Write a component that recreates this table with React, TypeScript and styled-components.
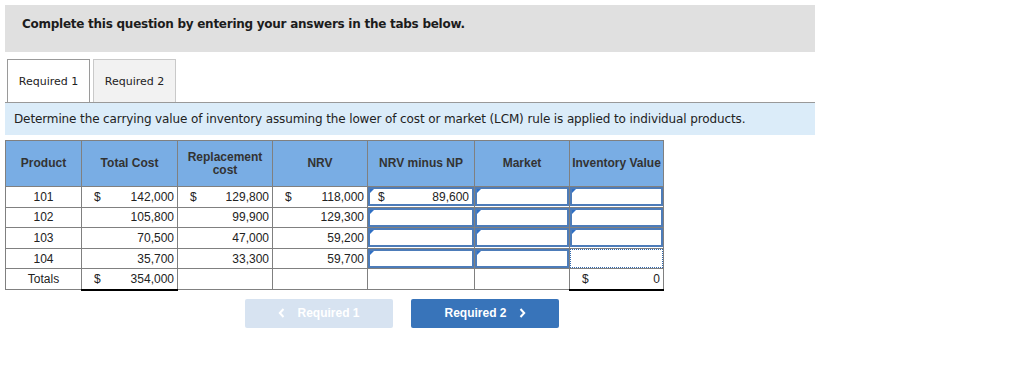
import React from "react";
import styled, { createGlobalStyle, css } from "styled-components";

const GlobalStyle = createGlobalStyle`
  html, body { margin: 0; padding: 0; background: #fff; }
  body { font-family: "DejaVu Sans", Verdana, sans-serif; color: #222; }
`;

const Page = styled.div`
  padding: 5px;
  width: 810px;
`;

const Banner = styled.div`
  height: 47px;
  box-sizing: border-box;
  background: #e0e0e0;
  padding: 12px 0 0 17px;
  line-height: 14px;
  font-size: 12px;
  letter-spacing: -0.26px;
  font-weight: bold;
  color: #1c1c1c;
`;

const TabBar = styled.div`
  margin-top: 7px;
  padding-left: 2px;
  display: flex;
  gap: 3px;
  border-bottom: 1px solid #999;
`;

const Tab = styled.div<{ $active?: boolean }>`
  width: 83px;
  height: 43px;
  box-sizing: border-box;
  display: flex;
  align-items: center;
  justify-content: center;
  font-size: 11px;
  color: #222;
  border: 1px solid ${(p) => (p.$active ? "#9a9a9a" : "#c9c9c9")};
  border-bottom: none;
  background: ${(p) => (p.$active ? "#fff" : "#f2f2f2")};
`;

const Instruction = styled.div`
  height: 32px;
  background: #dbecf9;
  display: flex;
  align-items: center;
  padding-left: 9px;
  font-size: 12px;
  letter-spacing: -0.12px;
  color: #222;
`;

const Grid = styled.table`
  margin-top: 5px;
  width: 658px;
  border-collapse: collapse;
  font-family: "Liberation Sans", Arial, sans-serif;
  font-size: 12px;
  color: #222;
  table-layout: fixed;
`;

const Head = styled.th<{ $w: number }>`
  width: ${(p) => p.$w - 1}px;
  height: 45px;
  background: #79ade4;
  border: 1px solid #808080;
  font-weight: bold;
  color: #333;
  padding: 0;
  line-height: 13px;
  text-align: center;
`;

const Cell = styled.td<{ $thick?: boolean }>`
  height: 19.6px;
  padding: 0;
  border: 1px solid #808080;
  ${(p) =>
    p.$thick &&
    css`
      border-bottom: 2px solid #000;
    `}
`;

const Label = styled.div`
  text-align: center;
`;

const Amount = styled.div`
  display: flex;
  justify-content: space-between;
  padding: 0 3px 0 12px;
`;

const Entry = styled.div<{ $dotted?: boolean }>`
  position: relative;
  box-sizing: border-box;
  height: 19px;
  border: ${(p) => (p.$dotted ? "1px dotted #2f68b0" : "2px solid #4d7cb9")};
  display: flex;
  align-items: center;
  justify-content: space-between;
  padding: 0 3px 0 8px;
  background: #fff;
`;

const Marker = styled.span`
  position: absolute;
  left: 0;
  top: 0;
  width: 0;
  height: 0;
  border-top: 4px solid #2f6fc4;
  border-right: 4px solid transparent;
`;

const Actions = styled.div`
  display: flex;
  gap: 18px;
  margin-top: 8px;
  padding-left: 240px;
`;

const NavButton = styled.button<{ $disabled?: boolean }>`
  width: 148px;
  height: 29px;
  border: none;
  border-radius: 2px;
  font-family: "Liberation Sans", Arial, sans-serif;
  font-weight: bold;
  font-size: 12px;
  color: #fff;
  display: flex;
  align-items: center;
  justify-content: center;
  gap: 12px;
  background: ${(p) => (p.$disabled ? "#d7e3f1" : "#3874ba")};
`;

const Chevron = ({ dir }: { dir: "left" | "right" }) => (
  <svg width="7" height="10" viewBox="0 0 7 10">
    <path
      d={dir === "left" ? "M5.5 1 L1.8 5 L5.5 9" : "M1.5 1 L5.2 5 L1.5 9"}
      fill="none"
      stroke="#fff"
      strokeWidth="2"
    />
  </svg>
);

type Row = {
  product: string;
  cost: string;
  repl: string;
  nrv: string;
  dollar?: boolean;
};

const rows: Row[] = [
  { product: "101", cost: "142,000", repl: "129,800", nrv: "118,000", dollar: true },
  { product: "102", cost: "105,800", repl: "99,900", nrv: "129,300" },
  { product: "103", cost: "70,500", repl: "47,000", nrv: "59,200" },
  { product: "104", cost: "35,700", repl: "33,300", nrv: "59,700" },
];

const Money = ({ sign, value }: { sign?: boolean; value: string }) => (
  <Amount>
    <span>{sign ? "$" : ""}</span>
    <span>{value}</span>
  </Amount>
);

export default function App() {
  return (
    <>
      <GlobalStyle />
      <Page>
        <Banner>Complete this question by entering your answers in the tabs below.</Banner>
        <TabBar>
          <Tab $active>Required 1</Tab>
          <Tab>Required 2</Tab>
        </TabBar>
        <Instruction>
          Determine the carrying value of inventory assuming the lower of cost or market (LCM) rule is applied to individual products.
        </Instruction>
        <Grid>
          <thead>
            <tr>
              <Head $w={76}>Product</Head>
              <Head $w={96}>Total Cost</Head>
              <Head $w={95}>
                Replacement
                <br />
                cost
              </Head>
              <Head $w={95}>NRV</Head>
              <Head $w={107}>NRV minus NP</Head>
              <Head $w={95}>Market</Head>
              <Head $w={94}>Inventory Value</Head>
            </tr>
          </thead>
          <tbody>
            {rows.map((r, i) => (
              <tr key={r.product}>
                <Cell>
                  <Label>{r.product}</Label>
                </Cell>
                <Cell>
                  <Money sign={r.dollar} value={r.cost} />
                </Cell>
                <Cell>
                  <Money sign={r.dollar} value={r.repl} />
                </Cell>
                <Cell>
                  <Money sign={r.dollar} value={r.nrv} />
                </Cell>
                <Cell>
                  <Entry>
                    <Marker />
                    <span>{r.dollar ? "$" : ""}</span>
                    <span>{r.dollar ? "89,600" : ""}</span>
                  </Entry>
                </Cell>
                <Cell>
                  <Entry>
                    <Marker />
                  </Entry>
                </Cell>
                <Cell>
                  {i === 3 ? (
                    <Entry $dotted />
                  ) : (
                    <Entry>
                      <Marker />
                    </Entry>
                  )}
                </Cell>
              </tr>
            ))}
            <tr>
              <Cell>
                <Label>Totals</Label>
              </Cell>
              <Cell $thick>
                <Money sign value="354,000" />
              </Cell>
              <Cell />
              <Cell />
              <Cell />
              <Cell />
              <Cell $thick>
                <Money sign value="0" />
              </Cell>
            </tr>
          </tbody>
        </Grid>
        <Actions>
          <NavButton $disabled>
            <Chevron dir="left" />
            Required 1
          </NavButton>
          <NavButton>
            Required 2
            <Chevron dir="right" />
          </NavButton>
        </Actions>
      </Page>
    </>
  );
}
